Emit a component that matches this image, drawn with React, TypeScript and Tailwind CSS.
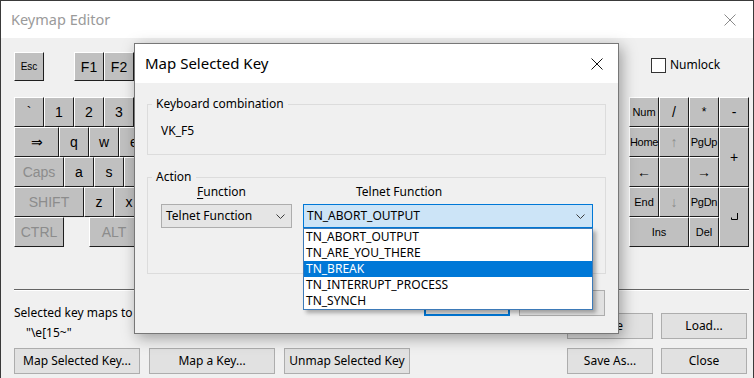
import type { ReactNode } from 'react'

const ui = "font-['Segoe_UI','Noto_Sans',sans-serif]"
const ms = "font-['Liberation_Sans',Arial,sans-serif]"

interface KeyProps {
  label?: ReactNode
  size?: string
  text?: string
  dim?: boolean
}

function Key({ label, size = 'w-[30px] h-[30px]', text = 'text-[14px]', dim = false }: KeyProps) {
  return (
    <div
      className={`flex shrink-0 items-center justify-center overflow-hidden whitespace-nowrap bg-[#c0c0c0] border border-t-white border-l-white border-r-[#1e1e1e] border-b-[#1e1e1e] leading-none ${ms} ${size} ${text} ${dim ? 'text-[#8c8c8c]' : 'text-black'}`}
    >
      {label}
    </div>
  )
}

function Chevron() {
  return (
    <svg width="9" height="5" viewBox="0 0 9 5">
      <polyline points="0.5,0.5 4.5,4.5 8.5,0.5" fill="none" stroke="#3c3c3c" strokeWidth="1" />
    </svg>
  )
}

function CloseX({ color }: { color: string }) {
  return (
    <svg width="12" height="12" viewBox="0 0 12 12">
      <path d="M0.5 0.5L11.5 11.5M11.5 0.5L0.5 11.5" stroke={color} strokeWidth="1" fill="none" />
    </svg>
  )
}

function EnterGlyph() {
  return (
    <svg width="9" height="9" viewBox="0 0 9 9">
      <path d="M7.5 0V6.5H1.5M1.5 4.5V6.5" stroke="#000" strokeWidth="1" fill="none" />
    </svg>
  )
}

function Button({ label, size, primary = false }: { label: string; size: string; primary?: boolean }) {
  return (
    <div
      className={`flex items-center justify-center bg-[#e1e1e1] text-[12px] text-black ${ui} ${size} ${
        primary ? 'border-2 border-[#0078d7]' : 'border border-[#adadad]'
      }`}
    >
      {label}
    </div>
  )
}

// only the keys that show left of the dialog
const row2 = ['`', '1', '2', '3']
const row3 = ['q', 'w', 'e']
const row4 = ['a', 's', 'd']
const row5 = ['z', 'x']
const telnetItems = ['TN_ABORT_OUTPUT', 'TN_ARE_YOU_THERE', 'TN_BREAK', 'TN_INTERRUPT_PROCESS', 'TN_SYNCH']

export default function App() {
  return (
    <div className={`relative w-[754px] h-[378px] overflow-hidden bg-[#f0f0f0] border-x border-t border-[#3a3a3a] ${ui}`}>
      {/* main window title */}
      <div className="flex h-[37px] items-center justify-between bg-white pl-[10px] pr-[17px]">
        <span className="text-[14.5px] text-[#9a9a9a]">Keymap Editor</span>
        <CloseX color="#8a8a8a" />
      </div>

      <div className="flex flex-col pl-[13px] pr-[4px]">
        <div className="flex pt-[14px]">
          {/* keyboard */}
          <div className="flex flex-col">
            <div className="flex">
              <Key label="Esc" size="w-[30px] h-[29px]" text="text-[10px]" />
              <div className="w-[30px] shrink-0" />
              <Key label="F1" size="w-[30px] h-[29px]" />
              <Key label="F2" size="w-[30px] h-[29px]" />
            </div>
            <div className="mt-[16px] flex">
              {row2.map((k) => (
                <Key key={k} label={k} />
              ))}
            </div>
            <div className="flex">
              <Key label="⇒" size="w-[45px] h-[30px]" />
              {row3.map((k) => (
                <Key key={k} label={k} />
              ))}
            </div>
            <div className="flex">
              <Key label="Caps" size="w-[50px] h-[30px]" dim />
              {row4.map((k) => (
                <Key key={k} label={k} />
              ))}
            </div>
            <div className="flex">
              <Key label="SHIFT" size="w-[70px] h-[30px]" dim />
              {row5.map((k) => (
                <Key key={k} label={k} />
              ))}
            </div>
            <div className="flex">
              <Key label="CTRL" size="w-[50px] h-[30px]" dim />
              <div className="w-[25px] shrink-0" />
              <Key label="ALT" size="w-[50px] h-[30px]" dim />
            </div>
          </div>

          {/* numpad */}
          <div className="ml-auto flex flex-col">
            <div className="mt-[5px] flex h-[16px] items-center gap-[4px] pl-[22px]">
              <div className="h-[15px] w-[15px] border border-[#333] bg-white" />
              <span className="text-[12px] text-black">Numlock</span>
            </div>
            <div className="mt-[24px] grid grid-cols-[repeat(4,30px)] grid-rows-[repeat(5,30px)]">
              <Key label="Num" size="w-full h-full" text="text-[11px]" />
              <Key label="/" size="w-full h-full" />
              <Key label="*" size="w-full h-full" text="text-[12px]" />
              <Key label="-" size="w-full h-full" />
              <Key label="Home" size="w-full h-full" text="text-[11px] tracking-[-0.3px]" />
              <Key label="↑" size="w-full h-full" dim />
              <Key label="PgUp" size="w-full h-full" text="text-[11px] tracking-[-0.3px]" />
              <div className="row-span-2 flex">
                <Key label="+" size="w-full h-full" />
              </div>
              <Key label="←" size="w-full h-full" />
              <Key size="w-full h-full" />
              <Key label="→" size="w-full h-full" />
              <Key label="End" size="w-full h-full" text="text-[11px]" />
              <Key label="↓" size="w-full h-full" dim />
              <Key label="PgDn" size="w-full h-full" text="text-[11px] tracking-[-0.3px]" />
              <div className="row-span-2 flex">
                <Key label={<EnterGlyph />} size="w-full h-full" />
              </div>
              <div className="col-span-2 flex">
                <Key label="Ins" size="w-full h-full" text="text-[11px]" />
              </div>
              <Key label="Del" size="w-full h-full" text="text-[11px]" />
            </div>
          </div>
        </div>

        <div className="mt-[42px] h-[2px] border-t border-t-[#646464] border-b border-b-white" />

        <div className="flex items-start">
          <div className="flex flex-col text-[12px] leading-[16px] text-black">
            <div className="mt-[14px]">Selected key maps to</div>
            <div className="mt-[4px] pl-[12px]">{'"\\e[15~"'}</div>
            <div className="mt-[7px] flex gap-[9px]">
              <Button label="Map Selected Key..." size="w-[126px] h-[26px]" />
              <Button label="Map a Key..." size="w-[126px] h-[26px]" />
              <Button label="Unmap Selected Key" size="w-[126px] h-[26px]" />
            </div>
          </div>
          <div className="ml-auto mr-[2px] mt-[22px] grid grid-cols-[86px_86px] gap-x-[8px] gap-y-[9px]">
            <Button label="Save" size="h-[26px]" />
            <Button label="Load..." size="h-[26px]" />
            <Button label="Save As..." size="h-[26px]" />
            <Button label="Close" size="h-[26px]" />
          </div>
        </div>
      </div>

      {/* Map Selected Key dialog */}
      <div className="absolute left-[133px] top-[42px] flex h-[291px] w-[485px] flex-col border border-[#777] bg-[#f0f0f0] shadow-[3px_4px_14px_rgba(0,0,0,0.35)]">
        <div className="flex h-[39px] shrink-0 items-center justify-between bg-white pl-[10px] pr-[15px]">
          <span className="text-[15px] text-black">Map Selected Key</span>
          <CloseX color="#111" />
        </div>
        <div className="flex flex-col px-[12px] pt-[13px] text-[12px] leading-[16px] text-black">
          <fieldset className="border border-[#dcdcdc]">
            <legend className="ml-[4px] px-[4px]">Keyboard combination</legend>
            <div className="h-[42px] pl-[13px] pt-[11px]">VK_F5</div>
          </fieldset>

          <fieldset className="mt-[14px] border border-[#dcdcdc]">
            <legend className="ml-[4px] px-[4px]">Action</legend>
            <div className="h-[89px]">
              <div className="-mt-px flex h-[16px]">
                <span className="w-[208px] pl-[49px]">
                  <span className="underline underline-offset-2">F</span>unction
                </span>
                <span>Telnet Function</span>
              </div>
              <div className="mt-[4px] flex">
                <div className="ml-[13px] flex h-[24px] w-[131px] items-center justify-between border border-[#adadad] bg-[#e5e5e5] pl-[4px] pr-[6px]">
                  <span>Telnet Function</span>
                  <Chevron />
                </div>
                <div className="relative ml-[11px]">
                  <div className="flex h-[24px] w-[290px] items-center justify-between border border-[#0078d7] bg-[#cce4f7] pl-[3px] pr-[7px]">
                    <span>TN_ABORT_OUTPUT</span>
                    <Chevron />
                  </div>
                  <div className="absolute left-0 top-full z-10 w-[290px] border border-[#3d7ab8] bg-white shadow-[3px_3px_4px_rgba(0,0,0,0.3)]">
                    {telnetItems.map((item) => (
                      <div
                        key={item}
                        className={`h-[16px] pl-[2px] leading-[16px] ${
                          item === 'TN_BREAK' ? 'bg-[#0078d7] text-white' : 'text-black'
                        }`}
                      >
                        {item}
                      </div>
                    ))}
                  </div>
                </div>
              </div>
            </div>
          </fieldset>

          <div className="mt-[16px] flex justify-end gap-[9px] pr-[1px]">
            <Button label="OK" size="w-[86px] h-[26px]" primary />
            <Button label="Cancel" size="w-[86px] h-[26px]" />
          </div>
        </div>
      </div>
    </div>
  )
}
